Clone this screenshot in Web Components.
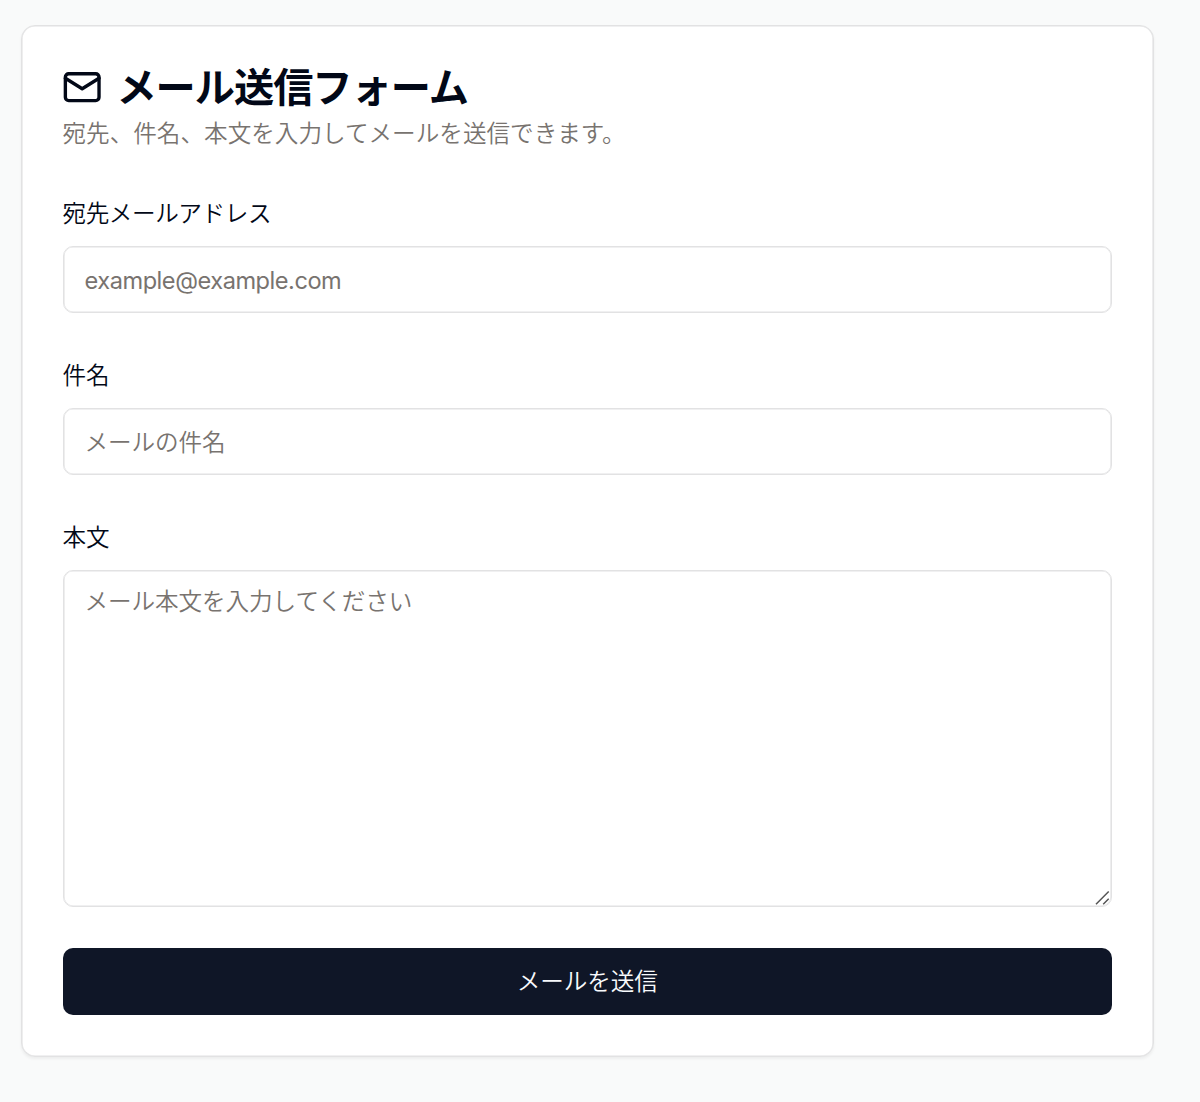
<!DOCTYPE html>
<html lang="ja">
<head>
<meta charset="utf-8">
<title>メール送信フォーム</title>
<style>
html,body{margin:0;height:100%}
body{background:#f9fafa;font-family:Inter,"Noto Sans CJK JP",sans-serif;font-size:23.6px;color:#020817;overflow:hidden;
--border:#e2e2e3;--muted:#78736f;--radius:10px}
</style>
</head>
<body>
<mail-card>
<card-heading>メール送信フォーム<span slot="description">宛先、件名、本文を入力してメールを送信できます。</span></card-heading>
<form-field style="--label-spacing:-.42px" label="宛先メールアドレス" placeholder="example@example.com" type="email"></form-field>
<form-field label="件名" placeholder="メールの件名"></form-field>
<form-field label="本文" placeholder="メール本文を入力してください" multiline></form-field>
<submit-button>メールを送信</submit-button>
</mail-card>
<script>
function define(name, html, setup) {
  const template = document.createElement('template');
  template.innerHTML = html;
  customElements.define(name, class extends HTMLElement {
    connectedCallback() {
      if (this.shadowRoot) return;
      const root = this.attachShadow({ mode: 'open' });
      root.append(template.content.cloneNode(true));
      if (setup) setup(this, root);
    }
  });
}
define('mail-card', `<style>
:host{display:block;padding:25px 46px 0 20.5px}
section{box-sizing:border-box;height:1032px;background:#fff;border:1px solid var(--border);border-radius:14px;padding:41px 41px 0;box-shadow:inset 0 0 0 .6px var(--border),0 2px 3px rgba(0,0,0,.05);display:flex;flex-direction:column}
</style><section><slot></slot></section>`);
define('card-heading', `<style>
:host{display:block;height:129px}
.row{display:flex;align-items:center;height:40px;gap:13.5px}
svg{width:40.4px;height:40.4px;flex:none;margin:0 .2px 0 -.2px}
h1{margin:2px 0 0;font-size:40.2px;line-height:40px;font-weight:600;letter-spacing:-1px;white-space:nowrap}
p{margin:10px 0 0;line-height:34px;font-weight:350;color:var(--muted)}
</style><div class="row"><svg viewBox="0 0 24 24" fill="none" stroke="currentColor" stroke-width="2" stroke-linecap="round" stroke-linejoin="round"><rect x="2" y="4" width="20" height="16" rx="2"/><path d="M22 6.7 12 12.9 2 6.7"/></svg><h1><slot></slot></h1></div><p><slot name="description"></slot></p>`);
define('form-field', `<style>
:host{display:block;height:162px}
:host([multiline]){height:428px}
label{display:block;box-sizing:border-box;height:50px;padding-top:1px;line-height:34px;font-weight:350;letter-spacing:var(--label-spacing,0)}
.box{position:relative;height:67px}
:host([multiline]) .box{height:337px}
input,textarea{display:block;box-sizing:border-box;width:100%;height:100%;margin:0;border:1px solid var(--border);box-shadow:inset 0 0 0 .6px var(--border);border-radius:var(--radius);background:#fff;padding:1px 21px 0;font:inherit;color:inherit;outline:0;resize:none}
textarea{padding:14px 21px;line-height:34px}
::placeholder{color:var(--muted);opacity:1;font-weight:350;letter-spacing:-.08px}
input[type=email]{padding-top:2px}
input[type=email]::placeholder{font-weight:400;letter-spacing:-.47px}
svg{position:absolute;right:1px;bottom:1px;width:17px;height:17px;display:none}
:host([multiline]) svg{display:block}
</style><label for="control"></label><div class="box"><svg viewBox="0 0 17 17" fill="none" stroke="#555" stroke-width="1.5"><path d="M2 15.2 14.7 2.5M9.2 15.2l5.5-5.5"/></svg></div>`, (host, root) => {
  const control = document.createElement(host.hasAttribute('multiline') ? 'textarea' : 'input');
  if (control.localName === 'input') control.type = host.getAttribute('type') || 'text';
  control.id = 'control';
  control.placeholder = host.getAttribute('placeholder');
  root.querySelector('label').textContent = host.getAttribute('label');
  root.querySelector('.box').prepend(control);
});
define('submit-button', `<style>
:host{display:block}
button{display:flex;align-items:center;justify-content:center;width:100%;height:67px;border:0;border-radius:var(--radius);background:#0f1627;color:#f8fafc;font:inherit;font-weight:350;letter-spacing:-.08px;padding:0 0 3px}
</style><button type="button"><slot></slot></button>`);
</script>
</body>
</html>
